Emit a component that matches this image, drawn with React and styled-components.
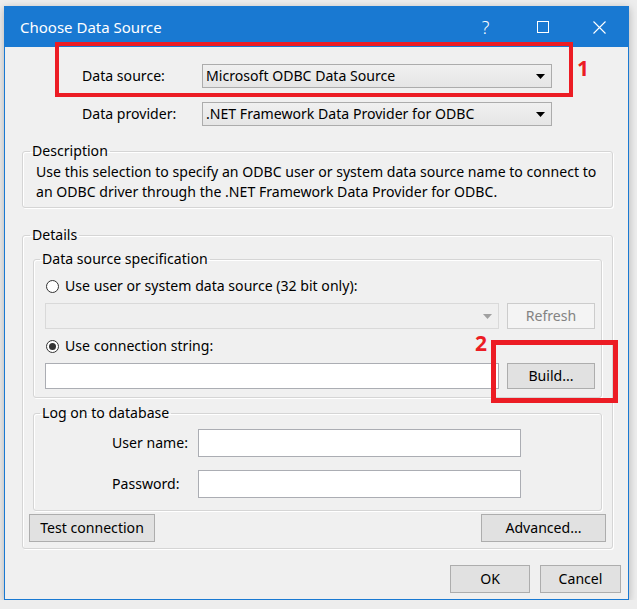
import React from 'react'
import styled, { createGlobalStyle } from 'styled-components'

const GlobalStyle = createGlobalStyle`
  body {
    margin: 0;
    background: #ededed;
    font-family: "Noto Sans", "Open Sans", sans-serif;
    font-size: 14.1px;
    color: #000;
  }
`

const Page = styled.div`
  padding: 6px 0 0 4px;
`

const Window = styled.div`
  position: relative;
  width: 625px;
  box-sizing: border-box;
  border: 1px solid #1979d2;
  background: #f0f0f0;
  box-shadow: 0 2px 8px rgba(0, 0, 0, 0.25);
  display: flex;
  flex-direction: column;
`

const TitleBar = styled.div`
  height: 40px;
  background: #1979d2;
  display: flex;
  align-items: center;
  color: #fff;
`

const Title = styled.div`
  flex: 1;
  padding-left: 15px;
  font-size: 15px;
  line-height: 20px;
`

const CaptionButton = styled.div`
  width: 57px;
  height: 40px;
  display: flex;
  align-items: center;
  justify-content: center;
  font-size: 18px;
  font-weight: 300;
`

const Body = styled.div`
  display: flex;
  flex-direction: column;
  padding: 17px 15px 6px 17px;
`

const FieldRow = styled.div`
  display: flex;
  align-items: center;
  height: 24px;
  padding-left: 60px;
  margin-top: ${({ $gap }) => $gap || 0}px;
`

const RowLabel = styled.div`
  width: ${({ $width }) => $width}px;
  line-height: 20px;
  white-space: nowrap;
`

const Combo = styled.div`
  box-sizing: border-box;
  width: ${({ $width }) => $width}px;
  height: ${({ $height }) => $height || 24}px;
  border: 1px solid ${({ $disabled }) => ($disabled ? '#d9d9d9' : '#acacac')};
  background: ${({ $disabled }) =>
    $disabled ? '#efefef' : 'linear-gradient(#f0f0f0, #e5e5e5)'};
  display: flex;
  align-items: center;
  padding: 0 6px 0 3px;
  line-height: 20px;
  white-space: nowrap;
`

const ComboText = styled.div`
  flex: 1;
`

const Arrow = ({ color }) => (
  <svg width="9" height="5" viewBox="0 0 9 5">
    <polygon points="0,0 9,0 4.5,5" fill={color} />
  </svg>
)

const Group = styled.fieldset`
  margin: ${({ $top }) => $top || 0}px 0 0 0;
  padding: 0;
  border: 1px solid #d5d5d5;
  border-radius: 3px;
  box-shadow: inset 1px 1px 0 #fff, 1px 1px 0 #fff;
  min-width: 0;
`

const Legend = styled.legend`
  margin-left: ${({ $indent }) => $indent || 7}px;
  padding: 0 2px;
  line-height: 20px;
`

const GroupBody = styled.div`
  padding: ${({ $pad }) => $pad};
`

const Description = styled.div`
  line-height: 20px;
`

const Line = styled.div`
  display: flex;
  align-items: center;
  gap: ${({ $gap }) => $gap || 0}px;
  margin-top: ${({ $top }) => $top || 0}px;
  height: ${({ $height }) => $height}px;
`

const Radio = styled.span`
  box-sizing: border-box;
  width: 13px;
  height: 13px;
  margin-left: 1px;
  margin-right: 6px;
  border: 1px solid #333;
  border-radius: 50%;
  background: #fff;
  display: flex;
  align-items: center;
  justify-content: center;

  &::after {
    content: '';
    width: 7px;
    height: 7px;
    border-radius: 50%;
    background: ${({ $checked }) => ($checked ? '#333' : 'transparent')};
  }
`

const RadioText = styled.span`
  line-height: 20px;
`

const Input = styled.div`
  box-sizing: border-box;
  width: ${({ $width }) => $width}px;
  height: ${({ $height }) => $height}px;
  border: 1px solid #abadb3;
  background: #fff;
`

const Button = styled.div`
  box-sizing: border-box;
  width: ${({ $width }) => $width}px;
  height: ${({ $height }) => $height || 28}px;
  border: 1px solid ${({ $disabled }) => ($disabled ? '#cccccc' : '#adadad')};
  background: ${({ $disabled }) => ($disabled ? '#f4f4f4' : '#e1e1e1')};
  color: ${({ $disabled }) => ($disabled ? '#838383' : '#000')};
  display: flex;
  align-items: center;
  justify-content: center;
  line-height: 20px;
  white-space: nowrap;
`

const LogonRow = styled.div`
  display: flex;
  align-items: center;
  margin-top: ${({ $top }) => $top || 0}px;
`

const LogonLabel = styled.div`
  width: 86px;
  line-height: 20px;
`

const ButtonBar = styled.div`
  display: flex;
  justify-content: space-between;
  margin: 3px -4px 0 -4px;
`

const Footer = styled.div`
  display: flex;
  justify-content: flex-end;
  gap: 10px;
  margin: 16px -8px 0 0;
`

// red callouts drawn over the dialog
const Callout = styled.div`
  position: absolute;
  box-sizing: border-box;
  left: ${({ $x }) => $x}px;
  top: ${({ $y }) => $y}px;
  width: ${({ $w }) => $w}px;
  height: ${({ $h }) => $h}px;
  border: ${({ $b }) => $b}px solid #ec1c24;
  pointer-events: none;
`

const CalloutNumber = styled.div`
  position: absolute;
  left: ${({ $x }) => $x}px;
  top: ${({ $y }) => $y}px;
  color: #ec1c24;
  font-size: 21px;
  font-weight: 700;
  line-height: 1;
`

const App = () => (
  <>
    <GlobalStyle />
    <Page>
      <Window>
        <TitleBar>
          <Title>Choose Data Source</Title>
          <CaptionButton>?</CaptionButton>
          <CaptionButton>
            <svg width="12" height="12" viewBox="0 0 12 12">
              <rect x="0.5" y="0.5" width="11" height="11" fill="none" stroke="#fff" strokeWidth="1" />
            </svg>
          </CaptionButton>
          <CaptionButton>
            <svg width="13" height="13" viewBox="0 0 13 13">
              <path d="M0.5 0.5 L12.5 12.5 M12.5 0.5 L0.5 12.5" stroke="#fff" strokeWidth="1.1" />
            </svg>
          </CaptionButton>
        </TitleBar>

        <Body>
          <FieldRow>
            <RowLabel $width={120}>Data source:</RowLabel>
            <Combo $width={350}>
              <ComboText>Microsoft ODBC Data Source</ComboText>
              <Arrow color="#000" />
            </Combo>
          </FieldRow>
          <FieldRow $gap={14}>
            <RowLabel $width={120}>Data provider:</RowLabel>
            <Combo $width={350}>
              <ComboText>.NET Framework Data Provider for ODBC</ComboText>
              <Arrow color="#000" />
            </Combo>
          </FieldRow>

          <Group $top={15}>
            <Legend>Description</Legend>
            <GroupBody $pad="1px 10px 5px 13px">
              <Description>
                Use this selection to specify an ODBC user or system data source name to connect to
                <br />
                an ODBC driver through the .NET Framework Data Provider for ODBC.
              </Description>
            </GroupBody>
          </Group>

          <Group $top={17}>
            <Legend>Details</Legend>
            <GroupBody $pad="4px 10px 6px 10px">
              <Group>
                <Legend $indent={6}>Data source specification</Legend>
                <GroupBody $pad="7px 5px 8px 11px">
                  <Line $height={20}>
                    <Radio />
                    <RadioText>Use user or system data source (32 bit only):</RadioText>
                  </Line>
                  <Line $height={26} $top={7} $gap={8}>
                    <Combo $width={454} $height={26} $disabled>
                      <ComboText />
                      <Arrow color="#a0a0a0" />
                    </Combo>
                    <Button $width={88} $height={26} $disabled>Refresh</Button>
                  </Line>
                  <Line $height={20} $top={7}>
                    <Radio $checked />
                    <RadioText>Use connection string:</RadioText>
                  </Line>
                  <Line $height={26} $top={7} $gap={8}>
                    <Input $width={454} $height={26} />
                    <Button $width={88} $height={26}>Build...</Button>
                  </Line>
                </GroupBody>
              </Group>

              <Group $top={5}>
                <Legend $indent={6}>Log on to database</Legend>
                <GroupBody $pad="6px 6px 12px 78px">
                  <LogonRow>
                    <LogonLabel>User name:</LogonLabel>
                    <Input $width={323} $height={28} />
                  </LogonRow>
                  <LogonRow $top={13}>
                    <LogonLabel>Password:</LogonLabel>
                    <Input $width={323} $height={28} />
                  </LogonRow>
                </GroupBody>
              </Group>

              <ButtonBar>
                <Button $width={126}>Test connection</Button>
                <Button $width={125}>Advanced...</Button>
              </ButtonBar>
            </GroupBody>
          </Group>

          <Footer>
            <Button $width={80}>OK</Button>
            <Button $width={81}>Cancel</Button>
          </Footer>
        </Body>

        <Callout $x={50} $y={35} $w={518} $h={55} $b={4} />
        <CalloutNumber $x={572} $y={51}>1</CalloutNumber>
        <Callout $x={486} $y={333} $w={127} $h={63} $b={5} />
        <CalloutNumber $x={470} $y={326}>2</CalloutNumber>
      </Window>
    </Page>
  </>
)

export default App
